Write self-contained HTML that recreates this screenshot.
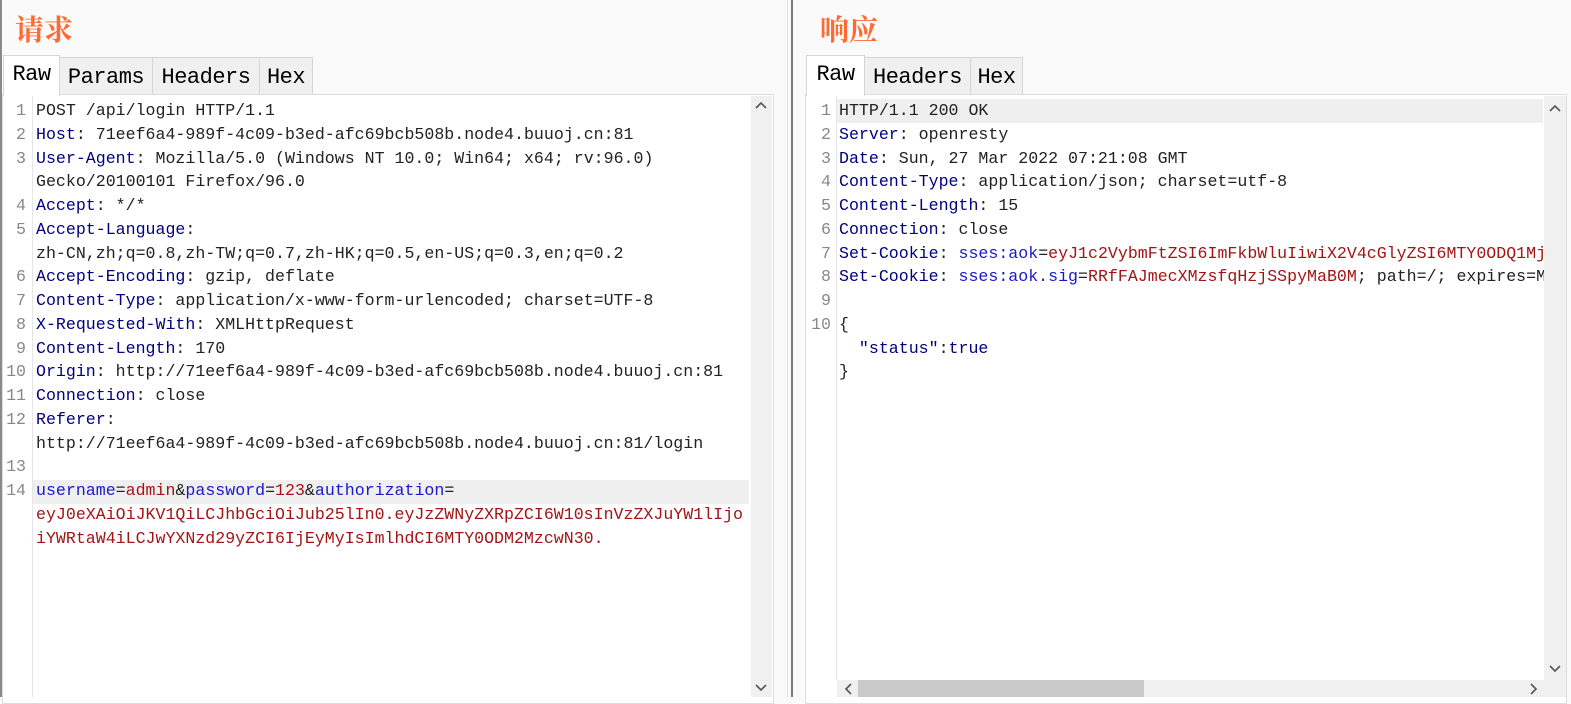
<!DOCTYPE html>
<html><head><meta charset="utf-8"><style>
*{margin:0;padding:0;box-sizing:border-box}
body{width:1571px;height:697px;overflow:hidden;background:#fafafa;position:relative;font-family:"Liberation Mono","DejaVu Sans Mono",monospace}
.abs{position:absolute}
.title{position:absolute;top:9px;font-family:"Noto Serif CJK SC","Liberation Serif",serif;font-size:29px;font-weight:700;color:#ff6a33;line-height:40px}
.tab{position:absolute;height:38px;background:#f0f0f0;border:1px solid #d6d6d6;border-bottom:none;font-family:"Liberation Mono",monospace;font-size:22px;line-height:40px;text-align:center;color:#000;letter-spacing:-0.5px}
.tab.act{background:#fff;top:55px!important;height:41px;border-bottom:none;line-height:38px}
.ed{position:absolute;background:#fff;border:1px solid #ddd}
.ln{position:absolute;height:23.75px;line-height:23.75px;font-size:16.6px;white-space:pre;color:#222}
.num{position:absolute;height:23.75px;line-height:23.75px;font-size:16.6px;color:#888;text-align:right;width:26px}
.k{color:#000080}.v{color:#a31515}.p{color:#1a1ac8}
.sb{position:absolute;background:#f0f0f0}
svg.arr{position:absolute}
</style></head><body>
<div class="abs" style="left:0;top:0;width:2px;height:697px;background:#8a8a8a"></div>
<div class="abs" style="left:787px;top:0;width:1px;height:697px;background:#e2e2e2"></div>
<div class="abs" style="left:791px;top:0;width:2px;height:697px;background:#7a7a7a"></div>

<div class="title" style="left:15px">请求</div>
<div class="title" style="left:820px">响应</div>

<div class="tab" style="left:59px;top:57px;width:94px">Params</div>
<div class="tab" style="left:152px;top:57px;width:108px">Headers</div>
<div class="tab" style="left:259px;top:57px;width:54px">Hex</div>
<div class="tab" style="left:864px;top:57px;width:107px">Headers</div>
<div class="tab" style="left:970px;top:57px;width:53px">Hex</div>

<div class="ed" style="left:2px;top:94px;width:772px;height:610px"></div>
<div class="tab act" style="left:3px;width:57px">Raw</div>
<div class="ed" style="left:805px;top:94px;width:762px;height:610px"></div>
<div class="tab act" style="left:806px;width:59px">Raw</div>

<div class="abs" style="left:32px;top:96px;width:1px;height:601px;background:#e6e6e6"></div>
<div class="abs" style="left:33px;top:480px;width:716px;height:24px;background:#efefef"></div>
<div class="sb" style="left:751px;top:96px;width:21px;height:601px"></div>
<svg class="arr" style="left:755px;top:102px" width="12" height="8"><path d="M1 6 L6 1 L11 6" stroke="#555" stroke-width="1.6" fill="none"/></svg>
<svg class="arr" style="left:755px;top:684px" width="12" height="8"><path d="M1 1 L6 6 L11 1" stroke="#555" stroke-width="1.6" fill="none"/></svg>

<div class="abs" style="left:836px;top:96px;width:1px;height:584px;background:#e6e6e6"></div>
<div class="abs" style="left:837px;top:99px;width:706px;height:24px;background:#efefef"></div>
<div class="sb" style="left:1544px;top:96px;width:22px;height:601px"></div>
<svg class="arr" style="left:1549px;top:105px" width="12" height="8"><path d="M1 6 L6 1 L11 6" stroke="#555" stroke-width="1.6" fill="none"/></svg>
<svg class="arr" style="left:1549px;top:665px" width="12" height="8"><path d="M1 1 L6 6 L11 1" stroke="#555" stroke-width="1.6" fill="none"/></svg>
<div class="sb" style="left:837px;top:680px;width:707px;height:17px"></div>
<div class="abs" style="left:858px;top:680px;width:286px;height:17px;background:#c9c9c9"></div>
<svg class="arr" style="left:845px;top:683px" width="8" height="12"><path d="M6 1 L1 6 L6 11" stroke="#555" stroke-width="1.6" fill="none"/></svg>
<svg class="arr" style="left:1530px;top:683px" width="8" height="12"><path d="M1 1 L6 6 L1 11" stroke="#555" stroke-width="1.6" fill="none"/></svg>

<div style="position:absolute;left:0;top:2px;width:750px;height:697px">
<div class="num" style="left:0;top:97px">1</div><div class="ln" style="left:36px;top:97px">POST /api/login HTTP/1.1</div>
<div class="num" style="left:0;top:120.75px">2</div><div class="ln" style="left:36px;top:120.75px"><span class="k">Host</span>: 71eef6a4-989f-4c09-b3ed-afc69bcb508b.node4.buuoj.cn:81</div>
<div class="num" style="left:0;top:144.5px">3</div><div class="ln" style="left:36px;top:144.5px"><span class="k">User-Agent</span>: Mozilla/5.0 (Windows NT 10.0; Win64; x64; rv:96.0)</div>
<div class="ln" style="left:36px;top:168.25px">Gecko/20100101 Firefox/96.0</div>
<div class="num" style="left:0;top:192px">4</div><div class="ln" style="left:36px;top:192px"><span class="k">Accept</span>: */*</div>
<div class="num" style="left:0;top:215.75px">5</div><div class="ln" style="left:36px;top:215.75px"><span class="k">Accept-Language</span>:</div>
<div class="ln" style="left:36px;top:239.5px">zh-CN,zh;q=0.8,zh-TW;q=0.7,zh-HK;q=0.5,en-US;q=0.3,en;q=0.2</div>
<div class="num" style="left:0;top:263.25px">6</div><div class="ln" style="left:36px;top:263.25px"><span class="k">Accept-Encoding</span>: gzip, deflate</div>
<div class="num" style="left:0;top:287px">7</div><div class="ln" style="left:36px;top:287px"><span class="k">Content-Type</span>: application/x-www-form-urlencoded; charset=UTF-8</div>
<div class="num" style="left:0;top:310.75px">8</div><div class="ln" style="left:36px;top:310.75px"><span class="k">X-Requested-With</span>: XMLHttpRequest</div>
<div class="num" style="left:0;top:334.5px">9</div><div class="ln" style="left:36px;top:334.5px"><span class="k">Content-Length</span>: 170</div>
<div class="num" style="left:0;top:358.25px">10</div><div class="ln" style="left:36px;top:358.25px"><span class="k">Origin</span>: http://71eef6a4-989f-4c09-b3ed-afc69bcb508b.node4.buuoj.cn:81</div>
<div class="num" style="left:0;top:382px">11</div><div class="ln" style="left:36px;top:382px"><span class="k">Connection</span>: close</div>
<div class="num" style="left:0;top:405.75px">12</div><div class="ln" style="left:36px;top:405.75px"><span class="k">Referer</span>:</div>
<div class="ln" style="left:36px;top:429.5px">http://71eef6a4-989f-4c09-b3ed-afc69bcb508b.node4.buuoj.cn:81/login</div>
<div class="num" style="left:0;top:453.25px">13</div>
<div class="num" style="left:0;top:477px">14</div><div class="ln" style="left:36px;top:477px"><span class="p">username</span>=<span class="v">admin</span>&amp;<span class="p">password</span>=<span class="v">123</span>&amp;<span class="p">authorization</span>=</div>
<div class="ln v" style="left:36px;top:500.75px">eyJ0eXAiOiJKV1QiLCJhbGciOiJub25lIn0.eyJzZWNyZXRpZCI6W10sInVzZXJuYW1lIjo</div>
<div class="ln v" style="left:36px;top:524.5px">iYWRtaW4iLCJwYXNzd29yZCI6IjEyMyIsImlhdCI6MTY0ODM2MzcwN30.</div>
</div>

<div style="position:absolute;left:805px;top:2px;width:739px;height:677px;overflow:hidden">
<div class="num" style="left:0;top:97px">1</div><div class="ln" style="left:34px;top:97px">HTTP/1.1 200 OK</div>
<div class="num" style="left:0;top:120.75px">2</div><div class="ln" style="left:34px;top:120.75px"><span class="k">Server</span>: openresty</div>
<div class="num" style="left:0;top:144.5px">3</div><div class="ln" style="left:34px;top:144.5px"><span class="k">Date</span>: Sun, 27 Mar 2022 07:21:08 GMT</div>
<div class="num" style="left:0;top:168.25px">4</div><div class="ln" style="left:34px;top:168.25px"><span class="k">Content-Type</span>: application/json; charset=utf-8</div>
<div class="num" style="left:0;top:192px">5</div><div class="ln" style="left:34px;top:192px"><span class="k">Content-Length</span>: 15</div>
<div class="num" style="left:0;top:215.75px">6</div><div class="ln" style="left:34px;top:215.75px"><span class="k">Connection</span>: close</div>
<div class="num" style="left:0;top:239.5px">7</div><div class="ln" style="left:34px;top:239.5px"><span class="k">Set-Cookie</span>: <span class="p">sses:aok</span>=<span class="v">eyJ1c2VybmFtZSI6ImFkbWluIiwiX2V4cGlyZSI6MTY0ODQ1MjQ2</span></div>
<div class="num" style="left:0;top:263.25px">8</div><div class="ln" style="left:34px;top:263.25px"><span class="k">Set-Cookie</span>: <span class="p">sses:aok.sig</span>=<span class="v">RRfFAJmecXMzsfqHzjSSpyMaB0M</span>; path=/; expires=Mon</div>
<div class="num" style="left:0;top:287px">9</div>
<div class="num" style="left:0;top:310.75px">10</div><div class="ln" style="left:34px;top:310.75px">{</div>
<div class="ln" style="left:34px;top:334.5px">  <span class="k">"status"</span>:<span class="k">true</span></div>
<div class="ln" style="left:34px;top:358.25px">}</div>
</div>
</body></html>
